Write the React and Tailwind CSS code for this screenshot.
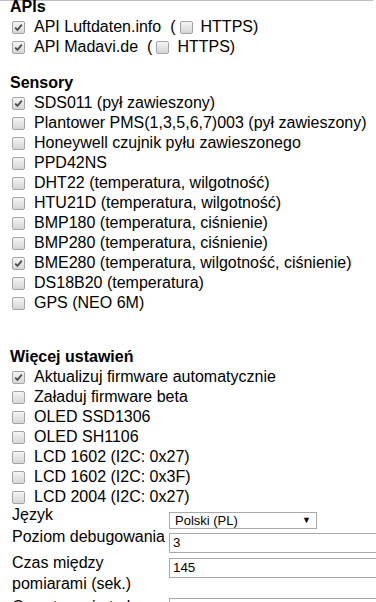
import React from 'react';

const Box = ({ checked, className = '' }) => (
  <span
    className={`inline-flex items-center justify-center w-[13px] h-[13px] shrink-0 rounded-[2px] border border-[#a4a4a4] bg-gradient-to-b from-[#f4f4f4] to-[#d6d6d6] ${className}`}
  >
    {checked && (
      <svg width="9" height="9" viewBox="0 0 9 9">
        <path d="M1.2 4.6 L3.5 6.9 L7.8 1.6" stroke="#4b4b4b" strokeWidth="1.7" fill="none" />
      </svg>
    )}
  </span>
);

const Row = ({ checked, children }) => (
  <div className="flex items-center h-5 pl-[12px] whitespace-nowrap">
    <Box checked={checked} />
    <span className="ml-[9px]">{children}</span>
  </div>
);

const HttpsRow = ({ label }) => (
  <div className="flex items-center h-5 pl-[12px] whitespace-nowrap">
    <Box checked />
    <span className="ml-[9px]">{label}</span>
    <span className="ml-[9px]">(</span>
    <Box className="ml-[4px]" />
    <span className="ml-[8px]">HTTPS)</span>
  </div>
);

const sensors = [
  ['SDS011 (pył zawieszony)', true],
  ['Plantower PMS(1,3,5,6,7)003 (pył zawieszony)', false],
  ['Honeywell czujnik pyłu zawieszonego', false],
  ['PPD42NS', false],
  ['DHT22 (temperatura, wilgotność)', false],
  ['HTU21D (temperatura, wilgotność)', false],
  ['BMP180 (temperatura, ciśnienie)', false],
  ['BMP280 (temperatura, ciśnienie)', false],
  ['BME280 (temperatura, wilgotność, ciśnienie)', true],
  ['DS18B20 (temperatura)', false],
  ['GPS (NEO 6M)', false],
];

const more = [
  ['Aktualizuj firmware automatycznie', true],
  ['Załaduj firmware beta', false],
  ['OLED SSD1306', false],
  ['OLED SH1106', false],
  ['LCD 1602 (I2C: 0x27)', false],
  ['LCD 1602 (I2C: 0x3F)', false],
  ['LCD 2004 (I2C: 0x27)', false],
];

export default function App() {
  return (
    <div className="w-[376px] h-[602px] overflow-hidden bg-white text-black text-[16px] leading-5 font-['Liberation_Sans',Arial,sans-serif]">
      <div className="h-px bg-[#bdbdbd] mr-[3px]" />
      <div className="-mt-[4px]">
        <div className="pl-[10px] font-bold">APIs</div>
        <HttpsRow label="API Luftdaten.info" />
        <HttpsRow label="API Madavi.de" />

        <div className="pl-[10px] font-bold mt-[16px]">Sensory</div>
        {sensors.map(([t, c]) => (
          <Row key={t} checked={c}>{t}</Row>
        ))}

        <div className="pl-[10px] font-bold mt-[34px]">Więcej ustawień</div>
        {more.map(([t, c]) => (
          <Row key={t} checked={c}>{t}</Row>
        ))}

        {/* tabela ustawień */}
        <div className="pl-[12px] -mt-[2px]">
          <div className="flex h-[22px]">
            <div className="w-[157px] shrink-0">Język</div>
            <div className="mt-[7px] h-[17px] w-[148px] border border-[#a9a9a9] flex items-center justify-between pl-[5px] pr-[5px] text-[13px] leading-none">
              <span>Polski (PL)</span>
              <span className="text-[9px]">▼</span>
            </div>
          </div>
          <div className="flex h-[25px]">
            <div className="w-[157px] shrink-0 whitespace-nowrap">Poziom debugowania</div>
            <div className="mt-[6px] h-[20px] w-[240px] shrink-0 border border-[#a9a9a9] pl-[3px] text-[13.33px] leading-[18px]">3</div>
          </div>
          <div className="flex h-[42px]">
            <div className="w-[157px] shrink-0 leading-[21px]">Czas między pomiarami (sek.)</div>
            <div className="mt-[6px] h-[20px] w-[240px] shrink-0 border border-[#a9a9a9] pl-[3px] text-[13.33px] leading-[18px]">145</div>
          </div>
          <div className="flex h-[44px]">
            <div className="w-[157px] shrink-0 leading-[21px] pt-[2px]">Czas trwania trybu routera</div>
            <div className="mt-[4px] h-[20px] w-[240px] shrink-0 border border-[#a9a9a9] pl-[3px] text-[13.33px] leading-[18px]">10</div>
          </div>
        </div>
      </div>
    </div>
  );
}
